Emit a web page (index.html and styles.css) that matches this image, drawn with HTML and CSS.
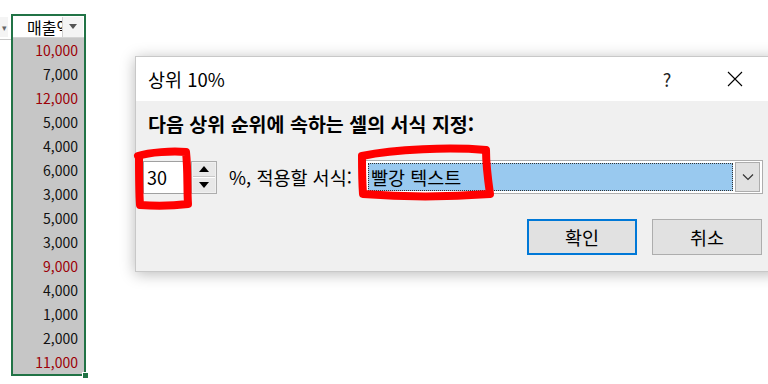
FILE: index.html
```html
<!DOCTYPE html>
<html lang="ko">
<head>
	<meta charset="UTF-8">
	<title>상위 10%</title>
	<link rel="stylesheet" href="styles.css">
</head>
<body>
	<div class="sheet">
		<div class="prev_col"><span class="filter_btn small">▾</span></div>
		<div class="col">
			<div class="col_head"><span class="head_text">매출액</span><span class="filter_btn"><i class="tri"></i></span></div>
			<div class="cell red">10,000</div>
			<div class="cell">7,000</div>
			<div class="cell red">12,000</div>
			<div class="cell">5,000</div>
			<div class="cell">4,000</div>
			<div class="cell">6,000</div>
			<div class="cell">3,000</div>
			<div class="cell">5,000</div>
			<div class="cell">3,000</div>
			<div class="cell red">9,000</div>
			<div class="cell">4,000</div>
			<div class="cell">1,000</div>
			<div class="cell">2,000</div>
			<div class="cell red">11,000</div>
			<span class="handle"></span>
		</div>
	</div>

	<div class="dialog">
		<div class="titlebar">
			<span class="title">상위 10%</span>
			<span class="help">?</span>
			<svg class="close" width="16" height="16" viewBox="0 0 16 16"><path d="M1 1L15 15M15 1L1 15" stroke="#000" stroke-width="1.1" fill="none"/></svg>
		</div>
		<div class="dlg_body">
			<div class="label">다음 상위 순위에 속하는 셀의 서식 지정:</div>
			<div class="row">
				<div class="num_input">30</div>
				<div class="spin">
					<div class="spin_btn"><i class="up"></i></div>
					<div class="spin_btn"><i class="down"></i></div>
				</div>
				<span class="fmt_label">%, 적용할 서식:</span>
				<div class="combo">
					<div class="combo_val">빨강 텍스트</div>
					<div class="combo_btn">
						<svg width="12" height="8" viewBox="0 0 12 8"><path d="M1 1.5L6 6.5L11 1.5" stroke="#333" stroke-width="1.2" fill="none"/></svg>
					</div>
				</div>
			</div>
			<div class="buttons">
				<button class="btn default">확인</button>
				<button class="btn">취소</button>
			</div>
		</div>
	</div>

	<svg class="marks" width="768" height="384" viewBox="0 0 768 384">
		<path d="M138 156 C150 152 172 151 186 152 C188 170 187 190 188 204 C172 206 154 206 140 205 C139 190 139 170 139 156" stroke="#ff0000" stroke-width="8" fill="none" stroke-linejoin="round" stroke-linecap="round"/>
		<path d="M362 156 C395 149 450 147 486 150 C486 165 488 180 490 194 C450 197 400 197 363 194 C362 180 362 165 362 156" stroke="#ff0000" stroke-width="8" fill="none" stroke-linejoin="round" stroke-linecap="round"/>
	</svg>
</body>
</html>
```

FILE: styles.css
```css
*{box-sizing:border-box;}
html,body{margin:0;height:100%;overflow:hidden;}
body{width:768px;height:384px;background:#fff;position:relative;font-family:"Noto Sans CJK KR","Liberation Sans",sans-serif;color:#000;}

.sheet{display:flex;padding-top:14px;}
.prev_col{width:11px;height:25px;border-bottom:1px solid #c8c8c8;position:relative;margin-top:1px;}
.filter_btn{display:flex;align-items:center;justify-content:center;}
.filter_btn.small{position:absolute;left:0;top:2px;width:8px;height:20px;font-size:9px;color:#666;background:#f4f4f4;}
.col{width:75px;border:2px solid #217346;position:relative;}
.col_head{height:22px;background:#fff;display:flex;align-items:center;justify-content:space-between;border-bottom:1px solid #d4d4d4;}
.head_text{font-size:16px;width:49px;overflow:hidden;white-space:nowrap;padding-left:14px;line-height:22px;}
.col_head .filter_btn{width:21px;height:20px;background:#f4f4f4;border-left:1px solid #d0d0d0;margin-right:1px;}
.tri{width:0;height:0;border-left:4px solid transparent;border-right:4px solid transparent;border-top:5px solid #555;}
.cell{height:24px;background:#c6c6c6;text-align:right;padding-right:6px;font-size:14px;line-height:24px;color:#111;}
.cell.red{color:#9c0006;}
.handle{position:absolute;right:-5px;bottom:-5px;width:7px;height:7px;background:#217346;border:1px solid #fff;}

.dialog{position:absolute;left:135px;top:56px;width:645px;height:216px;background:#f0f0f0;border:1px solid #c8c8c8;box-shadow:0 2px 14px rgba(0,0,0,0.28);}
.titlebar{height:44px;background:#fff;display:flex;align-items:center;padding-left:12px;}
.title{font-size:18.5px;flex:1;}
.help{font-size:18px;width:20px;margin-right:50px;text-align:center;color:#222;}
.close{margin-right:36px;}
.dlg_body{padding:9px 0 0 7px;}
.label{font-size:19.5px;font-weight:bold;padding-left:5px;height:28px;line-height:28px;white-space:nowrap;}
.row{display:flex;align-items:center;margin-top:22px;height:34px;}
.num_input{width:47px;height:33px;background:#fff;border:1px solid #a0a0a0;font-size:18px;line-height:31px;padding-left:3px;}
.spin{width:26px;height:33px;border:1px solid #adadad;margin-left:1px;display:flex;flex-direction:column;padding:1px;}
.spin_btn{flex:1;background:#e8e8e8;display:flex;align-items:center;justify-content:center;border-bottom:1px solid #c8c8c8;}
.spin_btn:last-child{border-bottom:none;border-top:1px solid #fff;}
.up{width:0;height:0;border-left:5px solid transparent;border-right:5px solid transparent;border-bottom:6px solid #000;}
.down{width:0;height:0;border-left:5px solid transparent;border-right:5px solid transparent;border-top:6px solid #000;}
.fmt_label{font-size:18.5px;width:132px;margin-left:12px;white-space:nowrap;}
.combo{width:402px;height:34px;border:1px solid #adadad;background:#fff;display:flex;align-items:center;padding:2px;}
.combo_val{flex:1;height:28px;margin-left:4px;background:#99c9ef;border:1px dotted #333;font-size:18.5px;line-height:26px;padding-left:2px;}
.combo_btn{width:25px;height:30px;margin-left:2px;background:#e1e1e1;border:1px solid #adadad;display:flex;align-items:center;justify-content:center;}

.buttons{display:flex;justify-content:flex-end;gap:15px;margin-top:25px;padding-right:17px;}
.btn{width:110px;height:36px;background:#e1e1e1;border:1px solid #adadad;font-family:inherit;font-size:18.5px;padding:0;}
.btn.default{border:2px solid #0078d7;}

.marks{position:absolute;left:0;top:0;pointer-events:none;}
```
